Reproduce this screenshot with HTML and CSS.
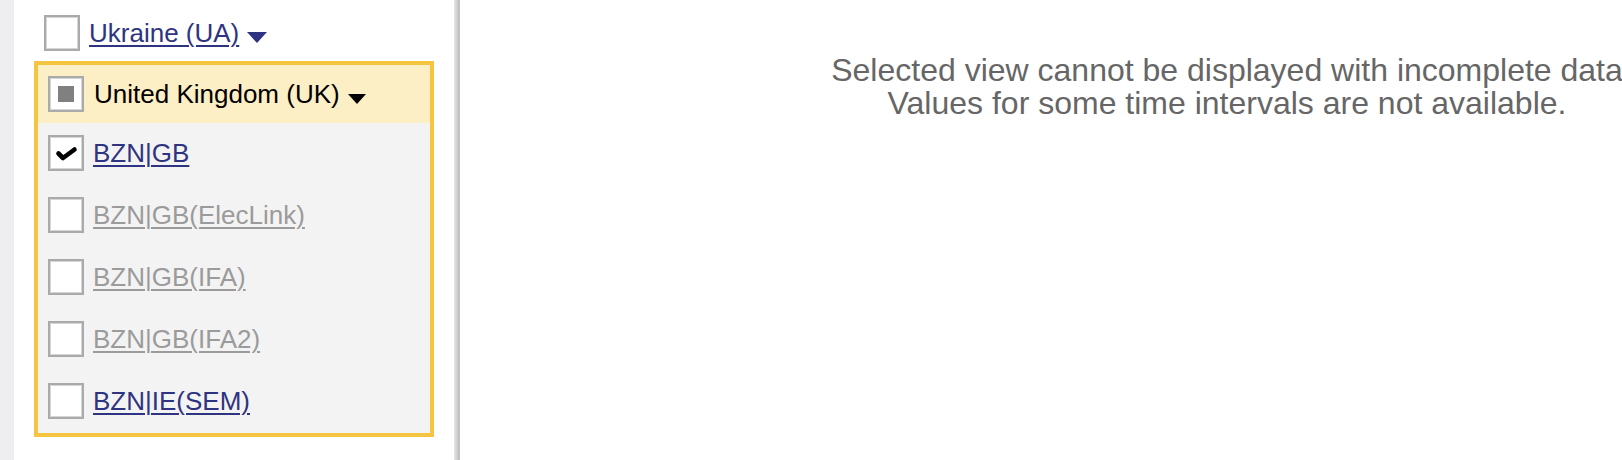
FILE: index.html
```html
<!DOCTYPE html>
<html lang="en">
<head>
<meta charset="utf-8">
<title>Area selection</title>
<link rel="stylesheet" href="styles.css">
</head>
<body>
<div class="page">
  <div class="gutter"></div>
  <aside class="sidebar">
    <div class="country">
      <span class="cb"></span>
      <a class="link" href="#">Ukraine (UA)</a><span class="tri tri-blue"></span>
    </div>
    <div class="group">
      <div class="group-head">
        <span class="cb"><span class="partial"></span></span>
        <span class="head-label">United Kingdom (UK)</span><span class="tri tri-black"></span>
      </div>
      <ul class="areas">
        <li class="area">
          <span class="cb">
            <svg class="check" viewBox="0 0 32 32" width="32" height="32"><path d="M8.5 16.5 L13 21 L24.5 12.5" fill="none" stroke="#000" stroke-width="4.6" stroke-linecap="round" stroke-linejoin="round"/></svg>
          </span>
          <a class="link" href="#">BZN|GB</a>
        </li>
        <li class="area">
          <span class="cb"></span>
          <a class="link disabled" href="#">BZN|GB(ElecLink)</a>
        </li>
        <li class="area">
          <span class="cb"></span>
          <a class="link disabled" href="#">BZN|GB(IFA)</a>
        </li>
        <li class="area">
          <span class="cb"></span>
          <a class="link disabled" href="#">BZN|GB(IFA2)</a>
        </li>
        <li class="area">
          <span class="cb"></span>
          <a class="link" href="#">BZN|IE(SEM)</a>
        </li>
      </ul>
    </div>
  </aside>
  <div class="divider"></div>
  <main class="main">
    <p class="message">Selected view cannot be displayed with incomplete data<br>Values for some time intervals are not available.</p>
  </main>
</div>
</body>
</html>
```

FILE: styles.css
```css
html, body {
  margin: 0;
  padding: 0;
  height: 100%;
  background: #ffffff;
  overflow: hidden;
}

body {
  font-family: "Liberation Sans", Arial, Helvetica, sans-serif;
  font-size: 26px;
  color: #000;
}

.page {
  display: flex;
  height: 460px;
  width: 100%;
}

.gutter {
  flex: 0 0 14px;
  background: #eeeef0;
}

.sidebar {
  flex: 0 0 440px;
  box-sizing: border-box;
  padding: 15px 20px 0 20px;
  background: #ffffff;
}

.country {
  display: flex;
  align-items: center;
  height: 36px;
  padding-left: 10px;
}

.cb {
  flex: 0 0 auto;
  box-sizing: border-box;
  width: 36px;
  height: 36px;
  border: 2px solid #aaaaaa;
  box-shadow: inset 0 0 0 1px #d6d6d6;
  background: #ffffff;
  display: flex;
  align-items: center;
  justify-content: center;
  margin-right: 9px;
}

.partial {
  width: 16px;
  height: 16px;
  background: #808080;
}

.check {
  display: block;
}

.link {
  color: #2f3482;
  text-decoration: underline;
  text-decoration-thickness: 2px;
  text-underline-offset: 3px;
  line-height: 36px;
}

.link.disabled {
  color: #9b9b9b;
}

.tri {
  display: inline-block;
  width: 0;
  height: 0;
  border-left: 10px solid transparent;
  border-right: 10px solid transparent;
  margin-left: 8px;
  align-self: center;
  margin-top: 9px;
}

.tri-blue {
  border-top: 11px solid #2f3482;
}

.tri-black {
  border-left-width: 9.5px;
  border-right-width: 9.5px;
  border-top: 10px solid #000000;
  margin-top: 10px;
}

.group {
  margin-top: 10px;
  width: 400px;
  box-sizing: border-box;
  border: 4px solid #f5c542;
  background: #f3f3f3;
}

.group-head {
  display: flex;
  align-items: center;
  height: 58px;
  padding-left: 10px;
  background: #fcefc5;
}

.group-head .cb {
  margin-right: 10px;
}

.head-label {
  line-height: 36px;
}

.areas {
  list-style: none;
  margin: 0;
  padding: 0;
}

.area {
  display: flex;
  align-items: flex-start;
  height: 62px;
  box-sizing: border-box;
  padding: 12px 0 0 10px;
}

.divider {
  flex: 0 0 6px;
  background: linear-gradient(to right, #e6e6e6 0%, #d2d2d2 45%, #bdbdbd 85%, #c8c8c8 100%);
}

.main {
  flex: 1 1 auto;
  min-width: 0;
  overflow: hidden;
  padding-top: 54px;
  background: #ffffff;
}

.message {
  width: 1534px;
  margin: 0;
  text-align: center;
  font-size: 32px;
  line-height: 33px;
  color: #666666;
}
```
